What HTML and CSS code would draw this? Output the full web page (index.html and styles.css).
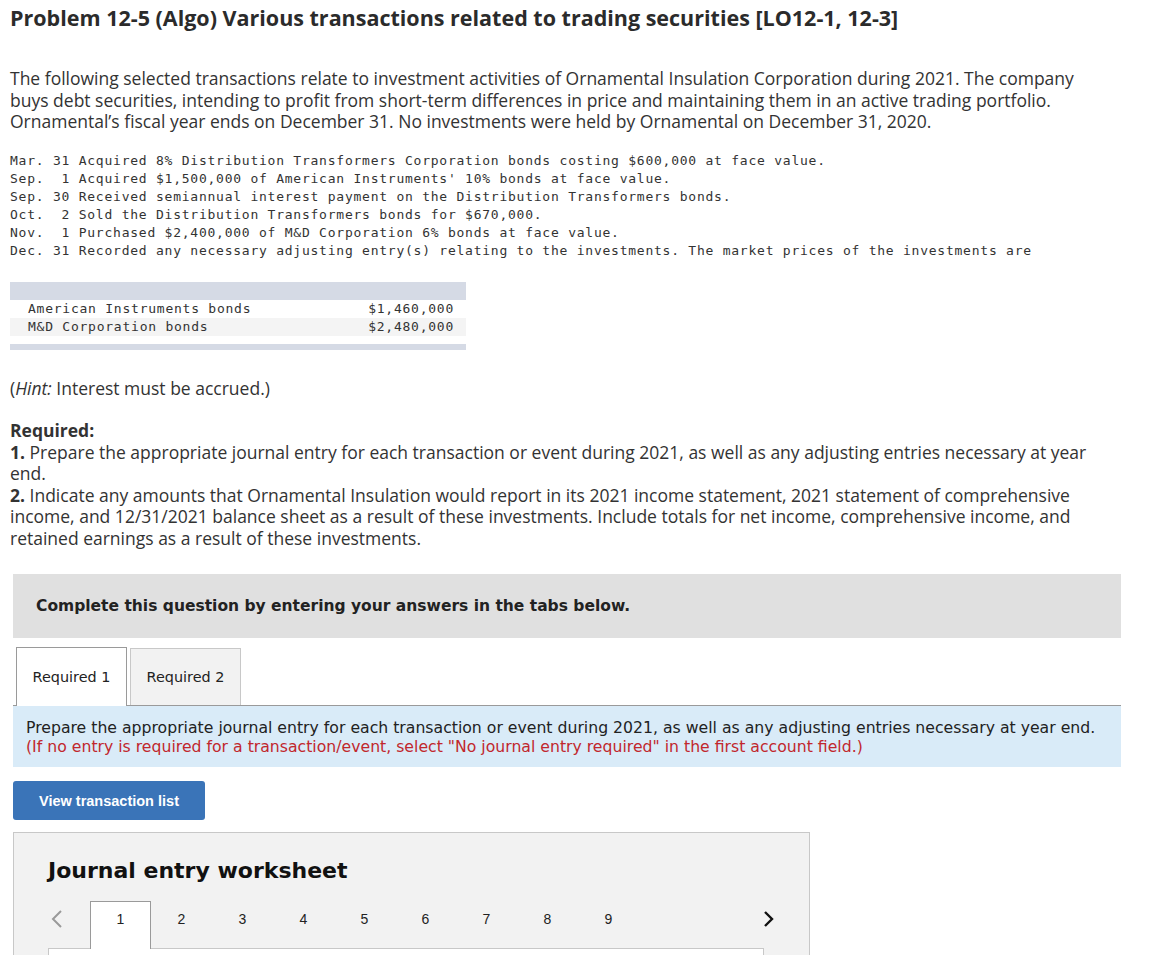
FILE: index.html
```html
<!DOCTYPE html>
<html lang="en">
<head>
<meta charset="utf-8">
<title>Problem 12-5</title>
<link rel="stylesheet" href="styles.css">
</head>
<body>
<h1 class="title">Problem 12-5 (Algo) Various transactions related to trading securities [LO12-1, 12-3]</h1>
<p class="intro">The following selected transactions relate to investment activities of Ornamental Insulation Corporation during 2021. The company buys debt securities, intending to profit from short-term differences in price and maintaining them in an active trading portfolio. Ornamental’s fiscal year ends on December 31. No investments were held by Ornamental on December 31, 2020.</p>
<pre class="events">Mar. 31 Acquired 8% Distribution Transformers Corporation bonds costing $600,000 at face value.
Sep.  1 Acquired $1,500,000 of American Instruments' 10% bonds at face value.
Sep. 30 Received semiannual interest payment on the Distribution Transformers bonds.
Oct.  2 Sold the Distribution Transformers bonds for $670,000.
Nov.  1 Purchased $2,400,000 of M&amp;D Corporation 6% bonds at face value.
Dec. 31 Recorded any necessary adjusting entry(s) relating to the investments. The market prices of the investments are</pre>
<div class="prices">
  <div class="band band-top"></div>
  <div class="row"><span>American Instruments bonds</span><span>$1,460,000</span></div>
  <div class="row alt"><span>M&amp;D Corporation bonds</span><span>$2,480,000</span></div>
  <div class="band band-bottom"></div>
</div>
<p class="hint">(<em>Hint:</em> Interest must be accrued.)</p>
<div class="required">
  <p class="req-head">Required:</p>
  <p><b>1.</b> Prepare the appropriate journal entry for each transaction or event during 2021, as well as any adjusting entries necessary at year end.</p>
  <p><b>2.</b> Indicate any amounts that Ornamental Insulation would report in its 2021 income statement, 2021 statement of comprehensive income, and 12/31/2021 balance sheet as a result of these investments. Include totals for net income, comprehensive income, and retained earnings as a result of these investments.</p>
</div>
<div class="panel">
  <div class="banner">Complete this question by entering your answers in the tabs below.</div>
  <div class="tabs">
    <div class="tab active">Required 1</div>
    <div class="tab">Required 2</div>
  </div>
  <div class="instructions">
    <p>Prepare the appropriate journal entry for each transaction or event during 2021, as well as any adjusting entries necessary at year end.</p>
    <p class="warn">(If no entry is required for a transaction/event, select "No journal entry required" in the first account field.)</p>
  </div>
  <button class="btn" type="button">View transaction list</button>
  <div class="worksheet">
    <h2 class="ws-title">Journal entry worksheet</h2>
    <div class="pager">
      <span class="arrow prev"><svg width="12" height="20" viewBox="0 0 12 20"><polyline points="10,2 2,10 10,18" fill="none" stroke="#9a9a9a" stroke-width="2"/></svg></span>
      <span class="page current">1</span>
      <span class="page">2</span>
      <span class="page">3</span>
      <span class="page">4</span>
      <span class="page">5</span>
      <span class="page">6</span>
      <span class="page">7</span>
      <span class="page">8</span>
      <span class="page">9</span>
      <span class="spacer"></span>
      <span class="arrow next"><svg width="12" height="20" viewBox="0 0 12 20"><polyline points="2,3 9,10 2,17" fill="none" stroke="#111" stroke-width="2.4"/></svg></span>
    </div>
    <div class="ws-body"></div>
  </div>
</div>
</body>
</html>
```

FILE: styles.css
```css
html, body {
  margin: 0;
  padding: 0;
  background: #fff;
}
body {
  padding: 5px 42px 40px 10px;
  font-family: "Open Sans", "Lato", sans-serif;
  color: #333;
}
p { margin: 0; }

.title {
  margin: 0;
  font-size: 21.5px;
  line-height: 26px;
  font-weight: 700;
  color: #2b2b2b;
  white-space: nowrap;
}

.intro {
  margin-top: 37px;
  font-size: 17.5px;
  line-height: 21.5px;
}

.events {
  margin: 19px 0 0 0;
  font-family: "DejaVu Sans Mono", "Liberation Mono", monospace;
  font-size: 13px;
  letter-spacing: 0.76px;
  line-height: 18px;
  color: #333;
}

.prices {
  margin-top: 22px;
  width: 456px;
  font-family: "DejaVu Sans Mono", "Liberation Mono", monospace;
  font-size: 13px;
  letter-spacing: 0.76px;
  color: #333;
}
.band { background: #d5dae5; }
.band-top { height: 18px; }
.band-bottom { height: 6px; margin-top: 8px; }
.row {
  height: 18px;
  line-height: 18px;
  display: flex;
  justify-content: space-between;
  padding: 0 12px 0 18px;
  background: #fff;
}
.row.alt { background: #f4f4f4; }

.hint {
  margin-top: 28px;
  font-size: 17.5px;
  line-height: 21.5px;
}

.required {
  margin-top: 21px;
  font-size: 17.5px;
  line-height: 21.5px;
}
.req-head { font-weight: 700; }

.panel {
  margin-top: 25px;
  margin-left: 3px;
  width: 1108px;
  font-family: "DejaVu Sans", Verdana, sans-serif;
}
.banner {
  height: 64px;
  display: flex;
  align-items: center;
  padding-left: 23px;
  background: #e0e0e0;
  font-weight: 700;
  font-size: 15.5px;
  color: #222;
}
.tabs {
  margin-top: 9px;
  display: flex;
  align-items: flex-end;
  border-bottom: 1px solid #9a9a9a;
  padding-left: 3px;
  gap: 3px;
}
.tab {
  width: 109px;
  height: 56px;
  display: flex;
  align-items: center;
  justify-content: center;
  font-size: 14.4px;
  color: #222;
  background: #f2f2f2;
  border: 1px solid #c8c8c8;
  border-bottom: none;
}
.tab.active {
  height: 57px;
  background: #fff;
  border-color: #9a9a9a;
  margin-bottom: -1px;
  padding-bottom: 1px;
}
.instructions {
  background: #d9ebf8;
  padding: 12px 13px 11px 13px;
  font-size: 15.7px;
  line-height: 19px;
  color: #222;
}
.warn { color: #c1272d; }

.btn {
  display: block;
  margin-top: 14px;
  width: 192px;
  height: 39px;
  border: none;
  border-radius: 3px;
  background: #3a74b8;
  color: #fff;
  font-family: "Liberation Sans", Arial, sans-serif;
  font-weight: 700;
  font-size: 14.5px;
  padding: 0;
}

.worksheet {
  margin-top: 12px;
  width: 797px;
  box-sizing: border-box;
  background: #f2f2f2;
  border: 1px solid #c8c8c8;
  padding: 0 0 30px 34px;
}
.ws-title {
  margin: 0;
  padding-top: 25px;
  font-size: 22px;
  line-height: 26px;
  font-weight: 700;
  color: #111;
}
.pager {
  margin-top: 17px;
  width: 727px;
  height: 47px;
  display: flex;
  align-items: flex-start;
  font-family: "Liberation Sans", Arial, sans-serif;
  font-size: 14px;
  line-height: 16px;
  color: #222;
}
.arrow {
  display: flex;
  align-items: center;
  height: 36px;
}
.prev { width: 42px; padding-left: 3px; box-sizing: border-box; }
.page {
  width: 61px;
  height: 47px;
  padding-top: 10px;
  text-align: center;
  box-sizing: border-box;
}
.page.current {
  background: #fff;
  border: 1px solid #9a9a9a;
  border-bottom: none;
  position: relative;
  z-index: 1;
  height: 48px;
  padding-top: 9px;
  margin-bottom: -1px;
}
.spacer { flex: 1; }
.ws-body {
  width: 714px;
  height: 120px;
  background: #fff;
  border: 1px solid #c8c8c8;
}
```
